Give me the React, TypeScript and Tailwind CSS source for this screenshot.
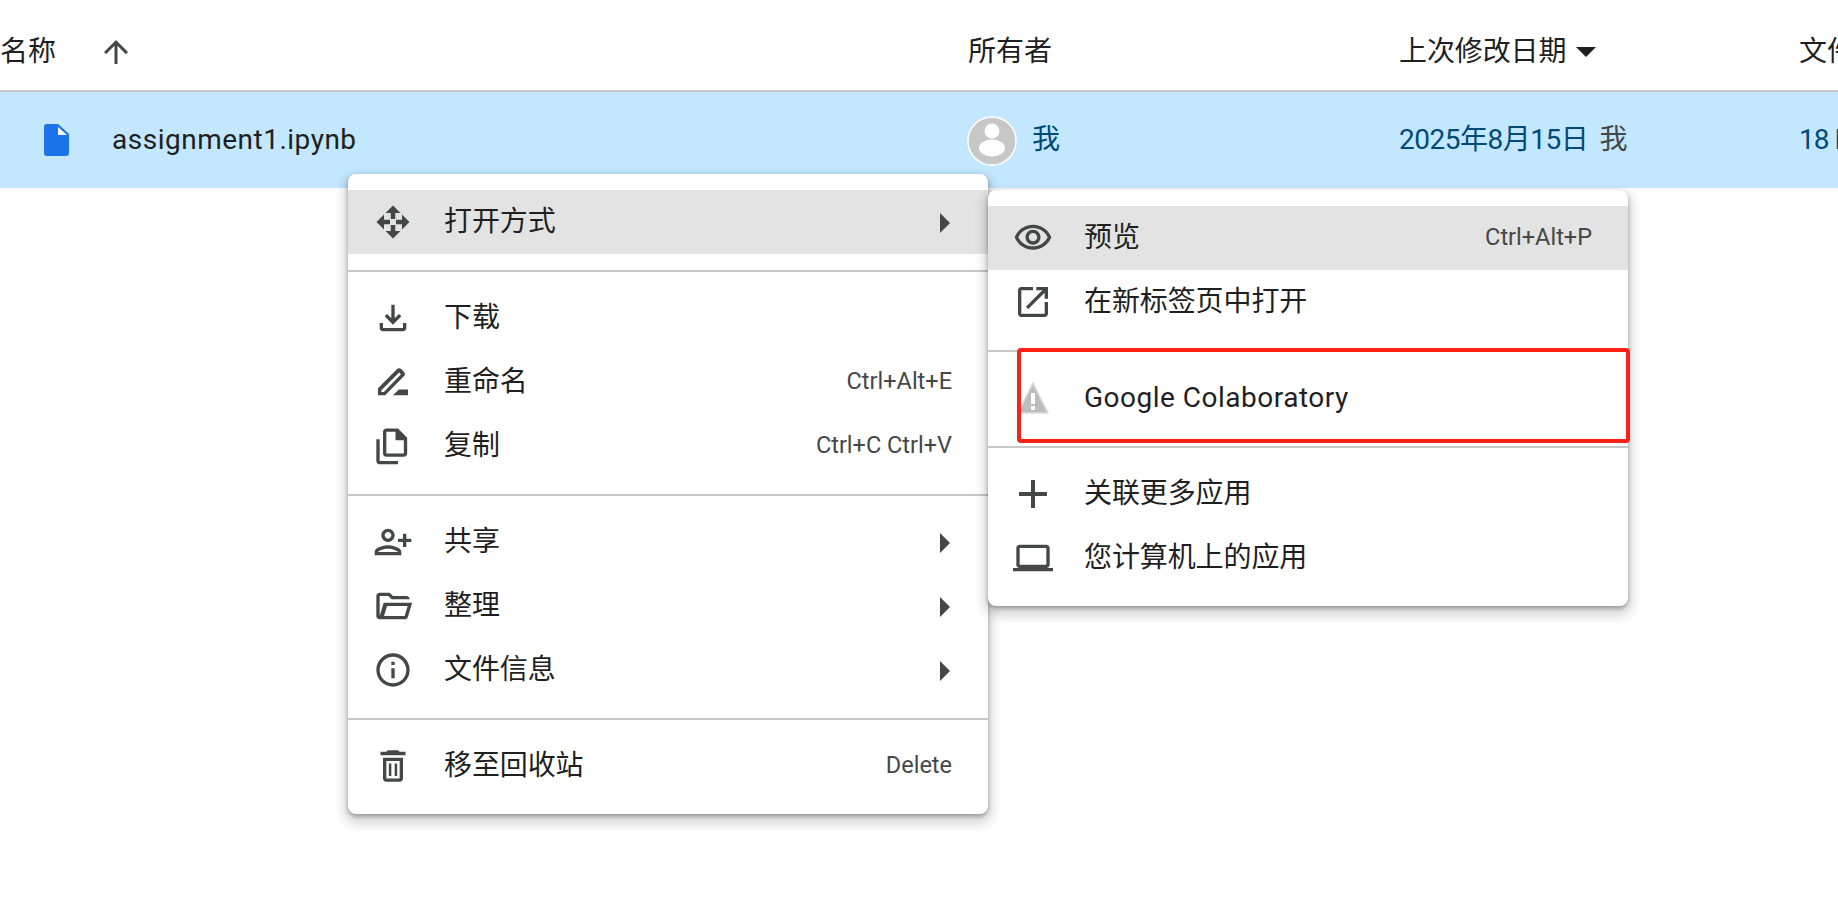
import React from 'react';

const cjk = 'font-["Roboto","Noto_Sans_CJK_SC",sans-serif]';
const menuCard =
  'absolute left-[348px] w-[640px] rounded-lg bg-white py-4 shadow-[0_6px_12px_3px_rgba(0,0,0,0.18),0_2px_4px_rgba(0,0,0,0.3)]';

const Icon = ({ d, size = 40, box = '0 0 24 24', flip = false }: { d: string; size?: number; box?: string; flip?: boolean }) => (
  <svg width={size} height={size} viewBox={box} fill="#444746" aria-hidden="true" className={flip ? '-scale-x-100' : ''}>
    <path fillRule="evenodd" d={d} />
  </svg>
);

const icons = {
  open: 'M12 1l5 5h-3.500v4h-3V6H7zM12 23l-5-5h3.500v-4h3v4H17zM1 12l5-5v3.500h4v3H6V17zM23 12l-5 5v-3.500h-4v-3h4V7z',
  download: 'M18 15v3H6v-3H4v3c0 1.1.9 2 2 2h12c1.1 0 2-.9 2-2v-3h-2zm-1-4l-1.41-1.41L13 12.17V4h-2v8.17L8.41 9.59 7 11l5 5 5-5z',
  rename: 'M3 20v-4.300L14.300 4.400a2 2 0 0 1 2.800 0l1.400 1.400a2 2 0 0 1 0 2.800L7.300 20zM5 18h1.500L16.800 7.400 15.700 6.300 5 17zM12 20l3.500-3.500H21V20z',
  copy: 'M2 8h2v13h11v2H4c-1.100 0-2-.9-2-2zM8 1.500h7l5.500 5.500v9.500c0 1.100-.9 2-2 2H8c-1.100 0-2-.9-2-2v-13c0-1.100.9-2 2-2zM8 3.500v13h10.500V8.500H13.500v-5z',
  share: 'M15 12c2.21 0 4-1.79 4-4s-1.79-4-4-4-4 1.79-4 4 1.79 4 4 4zm0-6c1.1 0 2 .9 2 2s-.9 2-2 2-2-.9-2-2 .9-2 2-2zm0 8c-2.67 0-8 1.34-8 4v2h16v-2c0-2.66-5.33-4-8-4zm-6 4c.22-.72 3.31-2 6-2 2.7 0 5.8 1.29 6 2H9zm-3-3v-3h3v-2H6V7H4v3H1v2h3v3h2z',
  folder: 'M160-160q-33 0-56.5-23.5T80-240v-480q0-33 23.5-56.5T160-800h240l80 80h320q33 0 56.5 23.5T880-640H447l-80-80H160v480l96-320h684L837-217q-8 26-29.5 41.5T760-160H160Zm105-80h495l72-240H337l-72 240Z',
  info: 'M11 7h2v2h-2zm0 4h2v6h-2zm1-9C6.48 2 2 6.48 2 12s4.48 10 10 10 10-4.48 10-10S17.52 2 12 2zm0 18c-4.41 0-8-3.59-8-8s3.59-8 8-8 8 3.59 8 8-3.59 8-8 8z',
  trash: 'M8 3.500 9 2.500h6l1 1h3.500v2h-15v-2zM6 7h12v12.500c0 1.100-.9 2-2 2H8c-1.100 0-2-.9-2-2V7zm2 2v10.500h8V9H8zm1.500 1.500H11V18H9.500zm3.500 0h1.500V18H13z',
  eye: 'M12 6c3.79 0 7.17 2.13 8.82 5.5C19.17 14.87 15.79 17 12 17s-7.17-2.13-8.82-5.500C4.830 8.130 8.210 6 12 6m0-2C7 4 2.730 7.110 1 11.500 2.730 15.890 7 19 12 19s9.270-3.110 11-7.500C21.270 7.110 17 4 12 4zm0 5c1.380 0 2.500 1.120 2.500 2.500S13.380 14 12 14s-2.500-1.120-2.500-2.500S10.620 9 12 9m0-2c-2.480 0-4.500 2.020-4.500 4.500S9.520 16 12 16s4.500-2.020 4.500-4.500S14.480 7 12 7z',
  newTab: 'M19 19H5V5h7V3H5c-1.110 0-2 .9-2 2v14c0 1.100.89 2 2 2h14c1.100 0 2-.9 2-2v-7h-2v7zM14 3v2h3.590l-9.830 9.830 1.410 1.410L19 6.410V10h2V3h-7z',
  plus: 'M19 13h-6v6h-2v-6H5v-2h6V5h2v6h6v2z',
  laptop: 'M20 18c1.100 0 1.990-.9 1.990-2L22 6c0-1.100-.9-2-2-2H4c-1.100 0-2 .9-2 2v10c0 1.100.9 2 2 2H0v2h24v-2h-4zM4 6h16v10H4V6z',
};

const WarningIcon = () => (
  <svg width="32" height="34" viewBox="0 0 32 34" aria-hidden="true">
    <path d="M16 2 31 32H1z" fill="#bdbdbd" stroke="#dcdcdc" strokeWidth="1.500" />
    <rect x="14" y="12" width="4" height="11" fill="#fff" />
    <rect x="14" y="25" width="4" height="4" fill="#fff" />
  </svg>
);

const Arrow = () => (
  <svg width="10" height="20" viewBox="0 0 10 20" fill="#444746" aria-hidden="true" className="mt-0.5 mr-0.5">
    <path d="M0 0l10 10L0 20z" />
  </svg>
);

type ItemProps = {
  icon: React.ReactNode;
  label: string;
  hint?: string;
  more?: boolean;
  active?: boolean;
  latin?: boolean;
};

const Item = ({ icon, label, hint, more, active, latin }: ItemProps) => (
  <div className={`flex h-16 items-center pl-[21px] pr-9 ${active ? 'bg-[#e3e3e3]' : ''}`}>
    <span className="flex w-[48px] shrink-0 items-center justify-center">{icon}</span>
    <span className={`ml-[27px] flex-1 text-[28px] leading-none text-[#1f1f1f] ${latin ? 'tracking-[0.5px]' : 'tracking-[-0.1px]'}`}>{label}</span>
    {hint && <span className="text-[23.5px] leading-none text-[#444746]">{hint}</span>}
    {more && <Arrow />}
  </div>
);

const Divider = () => <div className="mt-4 mb-[14px] h-0.5 bg-[#c7c7c7]" />;

export default function App() {
  return (
    <div className={`relative h-[920px] w-[1838px] overflow-hidden bg-white ${cjk}`}>
      <div className="flex h-[92px] items-center border-b-2 border-[#c7c7c7] pt-[14px] text-[28px] whitespace-nowrap text-[#1f1f1f]">
        <div className="flex w-[968px] shrink-0 items-center">
          <span>名称</span>
          <span className="ml-[42px]">
            <Icon size={36} d="M4 12l1.410 1.410L11 7.830V20h2V7.830l5.580 5.590L20 12l-8-8-8 8z" />
          </span>
        </div>
        <div className="w-[431px] shrink-0">所有者</div>
        <div className="flex w-[400px] shrink-0 items-center">
          <span className="tracking-[-0.1px]">上次修改日期</span>
          <svg width="20" height="10" viewBox="0 0 20 10" fill="#1f1f1f" className="ml-[10px]" aria-hidden="true">
            <path d="M0 0h20L10 10z" />
          </svg>
        </div>
        <div className="shrink-0">文件大小</div>
      </div>

      <div className="flex h-24 items-center bg-[#c2e7ff] text-[28px] whitespace-nowrap text-[#004a77]">
        <div className="flex w-[968px] shrink-0 items-center pl-11">
          <svg width="25" height="32" viewBox="0 0 25 32" aria-hidden="true">
            <path d="M3 0h11l11 10v19a3 3 0 0 1-3 3H3a3 3 0 0 1-3-3V3a3 3 0 0 1 3-3z" fill="#1a73e8" />
            <path d="M14 3l9 8h-9z" fill="#fff" />
          </svg>
          <span className="ml-[43px] tracking-[0.5px] text-[#1f1f1f]">assignment1.ipynb</span>
        </div>
        <div className="flex w-[431px] shrink-0 items-center">
          <svg width="50" height="50" viewBox="0 0 50 50" className="mt-0.5 -ml-px" aria-hidden="true">
            <circle cx="25" cy="25" r="24" fill="#c7c7c7" stroke="#fff" strokeWidth="1.500" />
            <circle cx="25" cy="15" r="7.500" fill="#fff" />
            <ellipse cx="25" cy="32" rx="13" ry="8.500" fill="#fff" />
          </svg>
          <span className="ml-[15px]">我</span>
        </div>
        <div className="w-[400px] shrink-0 tracking-[-0.5px]">
          2025年8月15日 <span className="ml-[5px] text-[#444746]">我</span>
        </div>
        <div className="shrink-0 tracking-[-1px]">18 KB</div>
      </div>

      <div className={`${menuCard} top-[174px]`}>
        <Item active more icon={<Icon size={36} d={icons.open} />} label="打开方式" />
        <Divider />
        <Item icon={<Icon d={icons.download} />} label="下载" />
        <Item icon={<Icon d={icons.rename} />} label="重命名" hint="Ctrl+Alt+E" />
        <Item icon={<Icon d={icons.copy} />} label="复制" hint="Ctrl+C Ctrl+V" />
        <Divider />
        <Item more icon={<Icon flip d={icons.share} />} label="共享" />
        <Item more icon={<Icon box="0 -960 960 960" d={icons.folder} />} label="整理" />
        <Item more icon={<Icon d={icons.info} />} label="文件信息" />
        <Divider />
        <Item icon={<Icon d={icons.trash} />} label="移至回收站" hint="Delete" />
      </div>

      <div className={`${menuCard} top-[190px] ml-[640px]`}>
        <Item active icon={<Icon d={icons.eye} />} label="预览" hint="Ctrl+Alt+P" />
        <Item icon={<Icon d={icons.newTab} />} label="在新标签页中打开" />
        <Divider />
        <Item latin icon={<WarningIcon />} label="Google Colaboratory" />
        <Divider />
        <Item icon={<Icon size={48} d={icons.plus} />} label="关联更多应用" />
        <Item icon={<Icon d={icons.laptop} />} label="您计算机上的应用" />
      </div>

      {/* red annotation box from the screenshot */}
      <div className="absolute top-[348px] left-[1017px] h-[95px] w-[613px] rounded-sm border-4 border-[#ff2015]" />
    </div>
  );
}
